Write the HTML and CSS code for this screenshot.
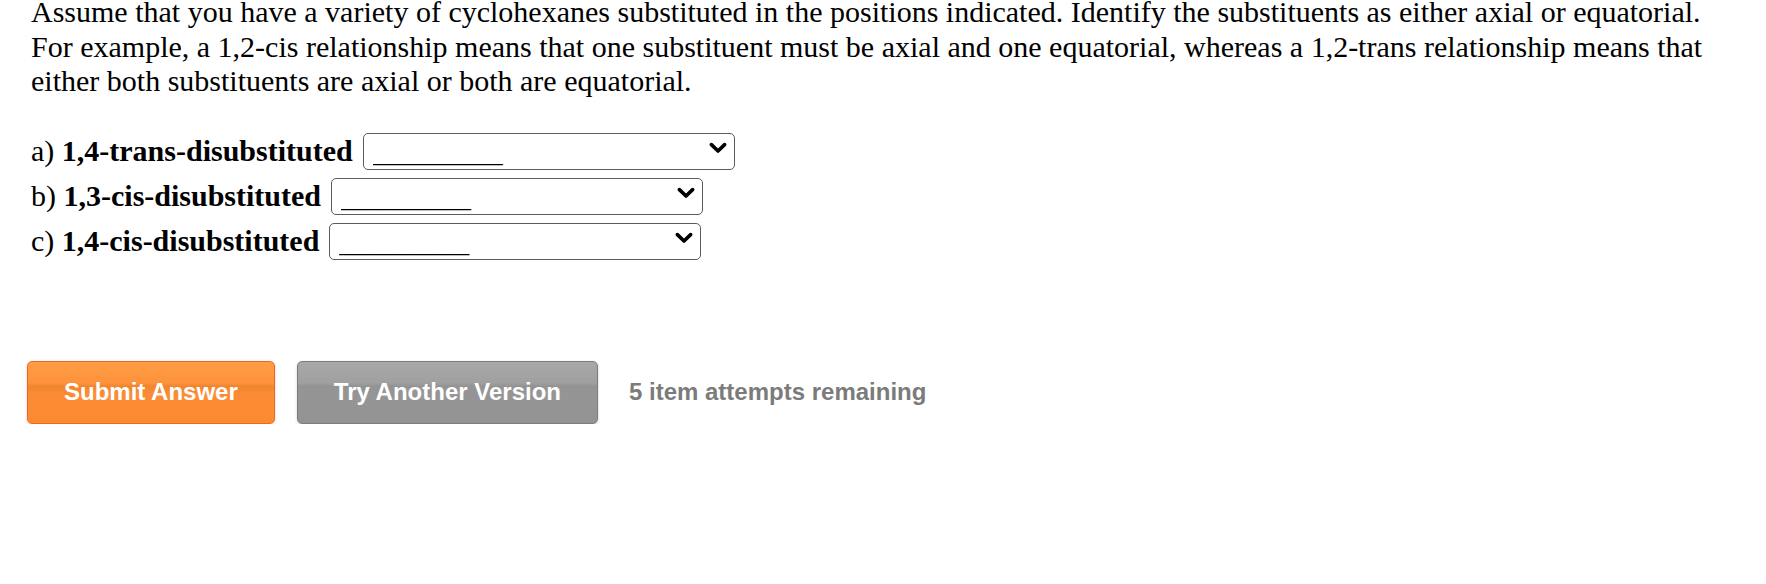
FILE: index.html
```html
<!DOCTYPE html>
<html lang="en">
<head>
<meta charset="utf-8">
<title>Cyclohexane substituents</title>
<link rel="stylesheet" href="styles.css">
</head>
<body>
<div class="page">
  <div class="question">
    <p class="prompt">Assume that you have a variety of cyclohexanes substituted in the positions indicated. Identify the substituents as either axial or equatorial. For example, a 1,2-cis relationship means that one substituent must be axial and one equatorial, whereas a 1,2-trans relationship means that either both substituents are axial or both are equatorial.</p>
    <div class="items">
      <div class="item">
        <span class="label">a) <b>1,4-trans-disubstituted</b></span>
        <span class="select-wrap">
          <select class="answer"><option>__________</option><option>both axial</option><option>both equatorial</option><option>one axial, one equatorial</option></select>
          <svg class="chevron" viewBox="0 0 18 12" aria-hidden="true"><path d="M2.4 2.6 L9 9 L15.6 2.6"/></svg>
        </span>
      </div>
      <div class="item">
        <span class="label">b) <b>1,3-cis-disubstituted</b></span>
        <span class="select-wrap">
          <select class="answer"><option>__________</option><option>both axial</option><option>both equatorial</option><option>one axial, one equatorial</option></select>
          <svg class="chevron" viewBox="0 0 18 12" aria-hidden="true"><path d="M2.4 2.6 L9 9 L15.6 2.6"/></svg>
        </span>
      </div>
      <div class="item">
        <span class="label">c) <b>1,4-cis-disubstituted</b></span>
        <span class="select-wrap">
          <select class="answer"><option>__________</option><option>both axial</option><option>both equatorial</option><option>one axial, one equatorial</option></select>
          <svg class="chevron" viewBox="0 0 18 12" aria-hidden="true"><path d="M2.4 2.6 L9 9 L15.6 2.6"/></svg>
        </span>
      </div>
    </div>
  </div>
  <div class="actions">
    <button class="btn btn-primary" type="button">Submit Answer</button>
    <button class="btn btn-secondary" type="button">Try Another Version</button>
    <span class="attempts">5 item attempts remaining</span>
  </div>
</div>
</body>
</html>
```
FILE: styles.css
```css
html, body {
  margin: 0;
  padding: 0;
  background: #ffffff;
}

body {
  font-family: "Liberation Serif", "Times New Roman", serif;
  color: #000000;
}

.page {
  padding-left: 27px;
}

.question {
  padding-left: 4px;
}

.prompt {
  margin: -5px 0 0 0;
  max-width: 1690px;
  font-size: 30px;
  line-height: 34.5px;
}

.items {
  margin-top: 34px;
  display: flex;
  flex-direction: column;
  gap: 8px;
}

.item {
  display: flex;
  align-items: center;
  gap: 10px;
  height: 37px;
}

.label {
  font-size: 30px;
  line-height: 34.5px;
  white-space: nowrap;
}

.select-wrap {
  position: relative;
  display: inline-flex;
}

.answer {
  -webkit-appearance: none;
  appearance: none;
  width: 372px;
  height: 37px;
  box-sizing: border-box;
  margin: 0;
  padding: 4px 34px 0 9px;
  border: 1px solid #5c5c5c;
  border-radius: 5px;
  background: #ffffff;
  color: #000000;
  font-family: "Liberation Serif", "Times New Roman", serif;
  font-size: 26px;
}

.chevron {
  position: absolute;
  right: 8px;
  top: 9px;
  width: 18px;
  height: 12px;
  pointer-events: none;
  fill: none;
  stroke: #000000;
  stroke-width: 3.6;
  stroke-linecap: round;
  stroke-linejoin: round;
}

.actions {
  margin-top: 101px;
  display: flex;
  align-items: center;
  gap: 22px;
}

.btn {
  height: 63px;
  padding: 0 36px;
  border-radius: 5px;
  font-family: "Liberation Sans", Arial, Helvetica, sans-serif;
  font-weight: bold;
  font-size: 24px;
  color: #ffffff;
  cursor: pointer;
  box-shadow: 0 1px 3px rgba(0, 0, 0, 0.18);
}

.btn-primary {
  border: 1px solid #f0661f;
  background: linear-gradient(to bottom, #ff9c45 0%, #fd933c 34%, #ef852e 40%, #fb8c35 52%, #fd8a33 100%);
}

.btn-secondary {
  border: 1px solid #7c7c7c;
  background: linear-gradient(to bottom, #a8a8a8 0%, #a0a0a0 34%, #939393 40%, #959595 52%, #939393 100%);
}

.attempts {
  margin-left: 9px;
  font-family: "Liberation Sans", Arial, Helvetica, sans-serif;
  font-weight: bold;
  font-size: 24px;
  color: #7b7b7b;
}
```
